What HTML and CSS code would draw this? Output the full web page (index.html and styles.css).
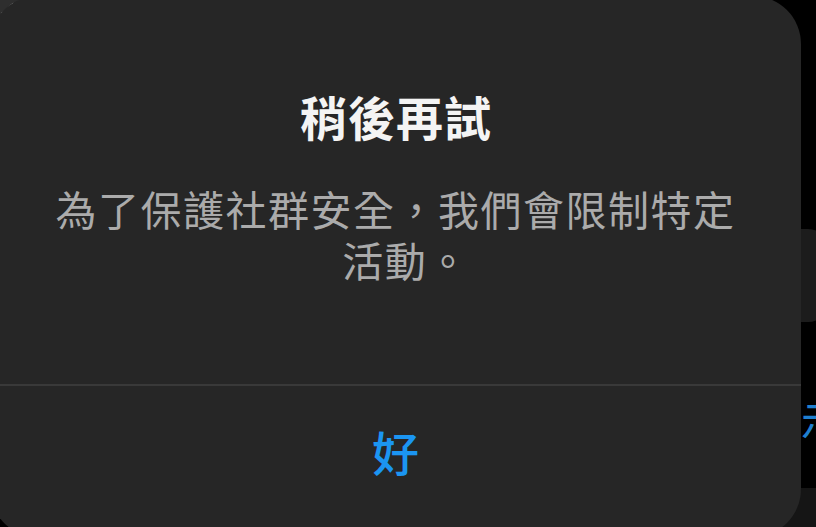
FILE: index.html
```html
<!DOCTYPE html>
<html lang="zh-Hant">
<head>
<meta charset="utf-8">
<title>稍後再試</title>
<link rel="stylesheet" href="styles.css">
</head>
<body>
<div class="screen">
  <div class="backdrop">
    <div class="bg-corner">
      <svg width="60" height="30" viewBox="0 0 60 30"><path d="M2 14 C8 12 10 6 14 4 M18 2 C24 6 28 10 34 4 M38 2 C40 1 42 0 44 0" stroke="#bdbdbd" stroke-width="3" fill="none"/></svg>
    </div>
    <div class="bg-pill"></div>
    <div class="bg-link">示</div>
    <div class="bg-bar"></div>
  </div>
  <div class="dialog" role="alertdialog">
    <div class="dialog-content">
      <h1 class="dialog-title">稍後再試</h1>
      <p class="dialog-message">為了保護社群安全，我們會限制特定活動<span class="trim-end">。</span></p>
    </div>
    <div class="dialog-divider"></div>
    <div class="dialog-actions">
      <button class="dialog-button">好</button>
    </div>
  </div>
</div>
</body>
</html>
```
FILE: styles.css
```css
html, body {
  margin: 0;
  padding: 0;
  background: #000;
}
body {
  font-family: "Noto Sans CJK TC", "Noto Sans", sans-serif;
  overflow: hidden;
}
.screen {
  position: relative;
  width: 816px;
  height: 527px;
  overflow: hidden;
  background: #000;
}
.backdrop {
  position: absolute;
  inset: 0;
}
.bg-corner {
  position: absolute;
  left: 0;
  top: 0;
  width: 60px;
  height: 30px;
  background: #2e2e2e;
}
.bg-pill {
  position: absolute;
  left: 760px;
  top: 229px;
  width: 70px;
  height: 93px;
  border-radius: 22px;
  background: #1c1c1c;
}
.bg-link {
  position: absolute;
  left: 801px;
  top: 392px;
  font-size: 42px;
  line-height: 56px;
  color: #1f7fcf;
}
.bg-bar {
  position: absolute;
  left: 700px;
  top: 488px;
  width: 116px;
  height: 39px;
  background: #151515;
}
.dialog {
  position: absolute;
  left: -10px;
  top: -4px;
  width: 811px;
  height: 541px;
  border-radius: 48px;
  background: #262626;
  display: flex;
  flex-direction: column;
}
.dialog-content {
  height: 388px;
  box-sizing: border-box;
  padding: 91px 48px 0;
  display: flex;
  flex-direction: column;
  align-items: center;
}
.dialog-title {
  margin: 0 0 0 1px;
  font-size: 47px;
  line-height: 57px;
  font-weight: 700;
  letter-spacing: 1px;
  color: #f4f4f4;
  text-align: center;
}
.dialog-message {
  margin: 39px 0 0;
  width: 700px;
  font-size: 41px;
  line-height: 51px;
  letter-spacing: 1.5px;
  color: #ababab;
  text-align: center;
}
.trim-end {
  margin-right: -21px;
}
.dialog-divider {
  height: 2px;
  background: #393939;
}
.dialog-actions {
  display: flex;
  justify-content: center;
  padding-top: 37px;
}
.dialog-button {
  border: 0;
  padding: 0;
  background: none;
  font-family: inherit;
  font-size: 47px;
  line-height: 56px;
  font-weight: 500;
  color: #1b95f2;
}
```
